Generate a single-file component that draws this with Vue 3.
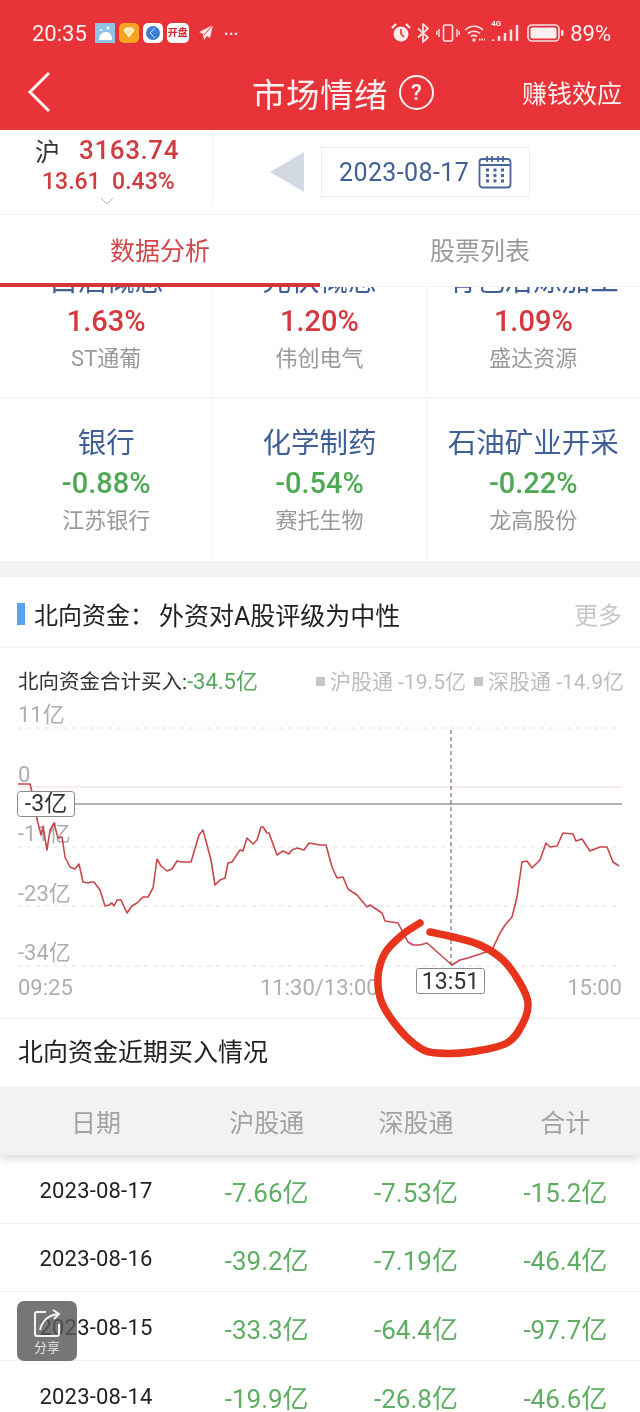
<script setup>
const sectors = [
  { name: '白酒概念', pct: '1.63%', stock: 'ST通葡', up: true },
  { name: '光伏概念', pct: '1.20%', stock: '伟创电气', up: true },
  { name: '有色冶炼加工', pct: '1.09%', stock: '盛达资源', up: true },
  { name: '银行', pct: '-0.88%', stock: '江苏银行', up: false },
  { name: '化学制药', pct: '-0.54%', stock: '赛托生物', up: false },
  { name: '石油矿业开采', pct: '-0.22%', stock: '龙高股份', up: false },
]

const rows = [
  ['2023-08-17', '-7.66亿', '-7.53亿', '-15.2亿'],
  ['2023-08-16', '-39.2亿', '-7.19亿', '-46.4亿'],
  ['2023-08-15', '-33.3亿', '-64.4亿', '-97.7亿'],
  ['2023-08-14', '-19.9亿', '-26.8亿', '-46.6亿'],
]

// chart y is relative to the chart block, which starts at 650
const raw = [
  [18, 784], [30, 784], [32, 792], [35, 810], [38, 823], [41, 835], [43, 827], [47, 850], [50, 830], [54, 823],
  [58, 838], [62, 837], [65, 857], [70, 867], [75, 869], [79, 864], [83, 882], [88, 883], [91, 882], [94, 882],
  [100, 890], [105, 906], [109, 905], [112, 903], [114, 906], [117, 900], [121, 900], [127, 913], [132, 906],
  [137, 903], [143, 897], [148, 897], [153, 888], [157, 859], [161, 866], [167, 871], [172, 869], [177, 861],
  [182, 862], [191, 862], [199, 835], [203, 830], [211, 860], [215, 885], [220, 880], [225, 878], [228, 863],
  [232, 862], [240, 850], [243, 851], [247, 838], [253, 844], [257, 840], [261, 827], [263, 827], [267, 833],
  [269, 833], [277, 855], [283, 851], [289, 854], [292, 850], [297, 848], [304, 850], [309, 843], [320, 845],
  [326, 845], [332, 867], [337, 878], [343, 877], [348, 889], [357, 895], [367, 907], [370, 905], [382, 913],
  [385, 921], [398, 923], [408, 942], [413, 945], [420, 945], [427, 943], [452, 965], [460, 960], [468, 958],
  [477, 955], [492, 950], [500, 933], [505, 925], [512, 917], [517, 897], [522, 862], [527, 861], [532, 868],
  [540, 860], [546, 843], [550, 847], [557, 846], [563, 833], [573, 834], [576, 841], [582, 839], [590, 851],
  [600, 847], [607, 847], [613, 862], [619, 866],
]
const flowLine = raw.map(([x, y]) => `${x},${y - 650}`).join(' ')

const ring = [
  [420, 923], [402, 935], [385, 953], [378, 977], [382, 1003], [400, 1030], [420, 1048], [437, 1053],
  [470, 1052], [507, 1043], [523, 1023], [528, 1003], [520, 983], [503, 960], [480, 945], [453, 937], [430, 932],
]
function smooth(points) {
  let d = `M${points[0][0]} ${points[0][1] - 650}`
  for (let i = 0; i < points.length - 1; i++) {
    const p0 = points[Math.max(i - 1, 0)]
    const p1 = points[i]
    const p2 = points[i + 1]
    const p3 = points[Math.min(i + 2, points.length - 1)]
    const c1x = p1[0] + (p2[0] - p0[0]) / 6
    const c1y = p1[1] + (p2[1] - p0[1]) / 6 - 650
    const c2x = p2[0] - (p3[0] - p1[0]) / 6
    const c2y = p2[1] - (p3[1] - p1[1]) / 6 - 650
    d += ` C${c1x} ${c1y} ${c2x} ${c2y} ${p2[0]} ${p2[1] - 650}`
  }
  return d
}
const ringPath = smooth(ring)

const gridLines = [78, 197, 256, 316]
const yLabels = [
  { text: '11亿', y: 72 },
  { text: '0', y: 132 },
  { text: '-11亿', y: 191 },
  { text: '-23亿', y: 251 },
  { text: '-34亿', y: 310 },
]
</script>

<template>
  <div class="page">
    <header class="head">
      <div class="status">
        <span class="clock">20:35</span>
        <svg class="ico" width="20" height="20" viewBox="0 0 20 20">
          <rect width="20" height="20" fill="#8fc4e6" />
          <path d="M4 17c0-5 3-8 7-8s6 3 6 8z" fill="#fff" />
          <circle cx="13" cy="5" r="1.5" fill="#fff" />
          <circle cx="6" cy="7" r="1" fill="#fff" />
        </svg>
        <svg class="ico" width="20" height="20" viewBox="0 0 20 20">
          <rect width="20" height="20" rx="5" fill="#f7a623" />
          <path d="M5 7l2-2h6l2 2-5 7z" fill="#ffe9a8" stroke="#fff" stroke-width="1" />
        </svg>
        <svg class="ico" width="20" height="20" viewBox="0 0 20 20">
          <rect width="20" height="20" rx="5" fill="#fff" />
          <circle cx="10" cy="10" r="7" fill="#3a80d6" />
          <path d="M12 5L7 10l5 5" fill="none" stroke="#cfe2f8" stroke-width="1" />
        </svg>
        <span class="open">开盘</span>
        <svg class="ico plane" width="16" height="18" viewBox="0 0 16 18">
          <path d="M15 1L1 8l4 2 1 6 3-4 3 2z" fill="#fbe9e9" />
          <path d="M15 1L6 11" stroke="#e83338" stroke-width="1" />
        </svg>
        <span class="dots">···</span>
        <span class="grow"></span>
        <svg class="ico alarm" width="22" height="22" viewBox="0 0 22 22">
          <circle cx="11" cy="12" r="7.5" fill="#fdeeee" />
          <path d="M11 7v5l3 3" fill="none" stroke="#e83338" stroke-width="1.6" />
          <path d="M2 6l4-4M20 6l-4-4" stroke="#fdeeee" stroke-width="2.2" />
        </svg>
        <svg class="ico blue" width="12" height="20" viewBox="0 0 12 20">
          <path d="M1 5.5l10 9-5 4.5V1l5 4.500-10 9" fill="none" stroke="#fbe3e3" stroke-width="1.700" />
        </svg>
        <svg class="ico" width="24" height="20" viewBox="0 0 24 20">
          <rect x="7.500" y="2" width="9" height="16" rx="1.500" fill="none" stroke="#fbe3e3" stroke-width="1.600" />
          <path d="M3 6v8M21 6v8M.8 8v4M23.200 8v4" stroke="#fbe3e3" stroke-width="1.400" />
        </svg>
        <svg class="ico" width="22" height="20" viewBox="0 0 22 20">
          <path d="M1 7c5.500-5 13-5 18 0M4 10.500c3.500-3 9-3 12 0M7 13.500c2-1.500 4-1.500 6 0" fill="none" stroke="#fbe3e3" stroke-width="1.700" />
          <circle cx="10" cy="17" r="1.700" fill="#fbe3e3" />
          <path d="M15 16.500h6" stroke="#fbe3e3" stroke-width="2" stroke-dasharray="1.500 1" />
        </svg>
        <span class="signal">
          <i class="net">4G</i>
          <svg width="32" height="20" viewBox="0 0 32 20">
            <path d="M2 18v-1.500M8 18v-5M14 18v-8M20 18v-11.500M26 18v-16" stroke="#fbe3e3" stroke-width="2.500" />
          </svg>
        </span>
        <svg class="ico" width="38" height="20" viewBox="0 0 38 20">
          <rect x="1" y="2" width="31" height="16" rx="4" fill="none" stroke="#fbe3e3" stroke-width="1.600" />
          <rect x="3.500" y="4.500" width="26" height="11" rx="2" fill="#fdf0f0" />
          <rect x="34" y="7" width="2.500" height="6" rx="1" fill="#fbe3e3" />
        </svg>
        <span class="battery">89%</span>
      </div>
      <div class="nav">
        <svg class="back" width="24" height="42" viewBox="0 0 24 42">
          <path d="M22 2L3 21l19 19" fill="none" stroke="#fdf0f0" stroke-width="3" />
        </svg>
        <div class="nav-title">
          <span>市场情绪</span>
          <i class="help">?</i>
        </div>
        <span class="nav-right">赚钱效应</span>
      </div>
    </header>

    <section class="market">
      <div class="index">
        <div class="index-top"><span class="hu">沪</span><b>3163.74</b></div>
        <div class="index-sub">13.61&nbsp;&nbsp;0.43%</div>
        <svg class="caret" width="14" height="8" viewBox="0 0 14 8">
          <path d="M1 1l6 6 6-6" fill="none" stroke="#b5b5b5" stroke-width="1" />
        </svg>
      </div>
      <div class="date-wrap">
        <span class="tri"></span>
        <div class="date-box">
          <span>2023-08-17</span>
          <svg width="34" height="34" viewBox="0 0 34 34">
            <rect x="1.500" y="4" width="31" height="28.500" rx="3" fill="none" stroke="#4a659c" stroke-width="1.800" />
            <path d="M1.500 10h31M9 1v6M14 1v6M20 1v6M25 1v6" stroke="#4a659c" stroke-width="1.800" />
            <path d="M8 15h3M15.500 15h3M23 15h3M8 20.500h3M15.500 20.500h3M23 20.500h3M8 26h3M15.500 26h3M23 26h3" stroke="#4a659c" stroke-width="3" />
          </svg>
        </div>
      </div>
    </section>

    <nav class="tabs">
      <span class="tab active">数据分析</span>
      <span class="tab">股票列表</span>
    </nav>

    <section class="sectors">
      <div class="sector-grid">
        <div v-for="s in sectors" :key="s.name" class="sector">
          <div class="sector-name">{{ s.name }}</div>
          <div class="sector-pct" :class="s.up ? 'up' : 'down'">{{ s.pct }}</div>
          <div class="sector-stock">{{ s.stock }}</div>
        </div>
      </div>
    </section>

    <section class="flow">
      <div class="flow-head">
        <i class="mark"></i>
        <span class="flow-title">北向资金：</span>
        <span class="flow-title rating">外资对A股评级为中性</span>
        <span class="more">更多</span>
      </div>
      <div class="chart">
        <svg class="chart-svg" width="640" height="368" viewBox="0 0 640 368">
          <line v-for="y in gridLines" :key="y" x1="18" x2="622" :y1="y" :y2="y" class="grid" />
          <line x1="18" x2="622" y1="137" y2="137" class="zero" />
          <text x="18" y="39" class="sum">北向资金合计买入:<tspan class="sum-val">-34.5亿</tspan></text>
          <rect x="316" y="27" width="9" height="9" class="dot" />
          <text x="330" y="39" class="legend">沪股通 -19.5亿</text>
          <rect x="474" y="27" width="9" height="9" class="dot" />
          <text x="488" y="39" class="legend">深股通 -14.9亿</text>
          <text v-for="l in yLabels" :key="l.text" x="18" :y="l.y" class="axis">{{ l.text }}</text>
          <text x="18" y="345" class="axis">09:25</text>
          <text x="260" y="345" class="axis">11:30/13:00</text>
          <text x="622" y="345" class="axis end">15:00</text>
          <polyline :points="flowLine" class="line" />
          <line x1="18" x2="622" y1="154" y2="154" class="cross" />
          <line x1="451" x2="451" y1="80" y2="316" class="cross-v" />
          <rect x="17.500" y="141.500" width="57" height="25" rx="3" class="tip" />
          <text x="46" y="161" class="tip-text">-3亿</text>
          <rect x="416.500" y="318.500" width="68" height="25" rx="2" class="tip" />
          <text x="450.500" y="339" class="tip-text">13:51</text>
          <path :d="ringPath" class="ring" />
        </svg>
      </div>
    </section>

    <section class="recent">
      <h3>北向资金近期买入情况</h3>
      <div class="thead">
        <span>日期</span><span>沪股通</span><span>深股通</span><span>合计</span>
      </div>
      <div v-for="r in rows" :key="r[0]" class="trow">
        <span class="day">{{ r[0] }}</span>
        <span v-for="(v, i) in r.slice(1)" :key="i" class="val">{{ v }}</span>
      </div>
    </section>

    <div class="share">
      <svg width="30" height="30" viewBox="0 0 30 30">
        <path d="M14 4H5a2 2 0 0 0-2 2v20a2 2 0 0 0 2 2h20a2 2 0 0 0 2-2v-10" fill="none" stroke="#f4f4f4" stroke-width="2" />
        <path d="M8 22c2-9 8-15 19-16M21 2l6 4-5 5" fill="none" stroke="#f4f4f4" stroke-width="2" />
      </svg>
      <span>分享</span>
    </div>
  </div>
</template>

<style>
html, body { margin: 0; background: #fff; }
</style>

<style scoped>
.page {
  position: relative;
  width: 640px;
  height: 1412px;
  overflow: hidden;
  background: #fff;
  font-family: Roboto, "Noto Sans CJK SC", sans-serif;
  filter: blur(0.4px);
}
.head {
  height: 130px;
  background: #e83338;
  color: #fdf0f0;
}
.status {
  height: 42px;
  padding: 12px 29px 0 32px;
  display: flex;
  align-items: center;
  gap: 4px;
}
.clock { font-size: 22px; margin-right: 4px; }
.ico { flex: none; }
.open {
  width: 22px;
  height: 20px;
  border-radius: 5px;
  background: #fff;
  color: #d8282e;
  font-size: 10px;
  font-weight: 700;
  line-height: 20px;
  text-align: center;
  white-space: nowrap;
}
.plane { margin-left: 5px; }
.dots { font-size: 16px; font-weight: 700; margin-left: 6px; letter-spacing: 0; }
.grow { flex: 1; }
.alarm { margin-right: 1px; }
.blue { margin-right: 3px; }
.signal { position: relative; width: 32px; height: 20px; margin-left: 1px; }
.net {
  position: absolute;
  left: 0;
  top: -4px;
  font-size: 8px;
  font-style: normal;
  font-weight: 700;
}
.battery { font-size: 22px; margin-left: 1px; }
.nav {
  height: 76px;
  display: flex;
  align-items: center;
  padding: 0 18px 0 27px;
}
.nav-title {
  flex: 1;
  display: flex;
  align-items: center;
  margin-left: 201px;
  font-size: 33.5px;
  letter-spacing: 0.5px;
}
.help {
  width: 31px;
  height: 31px;
  margin-left: 11px;
  border: 2px solid #fdf0f0;
  border-radius: 50%;
  font-size: 22px;
  font-style: normal;
  font-weight: 500;
  line-height: 31px;
  text-align: center;
}
.nav-right { font-size: 25px; }
.market {
  height: 85px;
  padding-top: 1px;
  box-sizing: border-box;
  display: flex;
  border-bottom: 1px solid #eeeeee;
}
.index {
  position: relative;
  width: 213px;
  height: 76px;
  padding-left: 35px;
  box-sizing: border-box;
  border-right: 1px solid #f3f3f3;
}
.index-top {
  display: flex;
  align-items: center;
  height: 38px;
}
.hu { font-size: 25px; color: #333; width: 44px; }
.index-top b { font-size: 26px; font-weight: 500; color: #cf3b40; letter-spacing: 0.6px; }
.index-sub {
  margin: -2px 0 0 7px;
  font-size: 23px;
  line-height: 30px;
  font-weight: 500;
  color: #cf3b40;
  white-space: nowrap;
}
.caret { position: absolute; left: 100px; top: 66px; }
.date-wrap {
  flex: 1;
  display: flex;
  align-items: center;
  height: 82px;
  padding-left: 57px;
}
.tri {
  width: 0;
  height: 0;
  border-style: solid;
  border-width: 20px 34px 20px 0;
  border-color: transparent #d3d9e2 transparent transparent;
}
.date-box {
  margin-left: 17px;
  width: 209px;
  height: 50px;
  box-sizing: border-box;
  border: 1px solid #eeeeee;
  display: flex;
  align-items: center;
  gap: 9px;
  padding-left: 17px;
  font-size: 25px;
  letter-spacing: 0.4px;
  color: #3f5f96;
}
.tabs {
  position: relative;
  height: 72px;
  display: flex;
  z-index: 1;
  background: #fff;
  border-bottom: 1px solid #f4f4f4;
  box-sizing: border-box;
}
.tab {
  flex: 1;
  text-align: center;
  padding-top: 19px;
  font-size: 25px;
  line-height: 36px;
  color: #9a9a9a;
}
.tab.active { color: #d2454a; }
.tabs::after {
  content: "";
  position: absolute;
  left: 0;
  bottom: -1px;
  width: 320px;
  height: 4px;
  background: #d8353a;
}
.sectors {
  height: 274px;
  overflow: hidden;
}
.sector-grid {
  margin-top: -51px;
  display: grid;
  grid-template-columns: repeat(3, 1fr);
  grid-auto-rows: 162px;
}
.sector {
  padding-top: 29px;
  box-sizing: border-box;
  text-align: center;
  border-right: 1px solid #f5f5f5;
  border-bottom: 1px solid #f2f2f2;
}
.sector:nth-child(3n) { border-right: 0; }
.sector:nth-child(n + 4) { border-bottom: 0; }
.sector-name { font-size: 28.500px; line-height: 34px; color: #3f5f96; white-space: nowrap; }
.sector-pct { margin-top: 5px; font-size: 29px; line-height: 34px; font-weight: 500; }
.sector-pct.up { color: #d6383e; }
.sector-pct.down { color: #4fa854; }
.sector-stock { margin-top: 6px; font-size: 22px; line-height: 30px; color: #999; }
.flow {
  border-top: 16px solid #f3f3f3;
}
.flow-head {
  height: 71px;
  box-sizing: border-box;
  display: flex;
  align-items: center;
  padding: 3px 18px 0 17px;
  border-bottom: 1px solid #f0f0f0;
}
.mark { width: 8px; height: 22px; background: #5aa2ec; margin-right: 9px; }
.flow-title { font-size: 24px; color: #222; }
.rating { font-size: 25px; margin-left: 5px; }
.more { margin-left: auto; font-size: 24px; color: #c8c8c8; }
.chart {
  height: 371px;
  padding-top: 2px;
  border-bottom: 1px solid #f0f0f0;
  box-sizing: border-box;
}
.chart-svg { display: block; overflow: visible; position: relative; z-index: 2; }
.grid { stroke: #e2e2e2; stroke-width: 1; stroke-dasharray: 4 5; }
.zero { stroke: #f0d8da; stroke-width: 1; }
.sum { font-size: 20.500px; fill: #333; }
.sum-val { fill: #59a75e; font-size: 22px; }
.legend { font-size: 21px; fill: #bdbdbd; }
.dot { fill: #c6c6c6; }
.axis { font-size: 22px; fill: #aeaeae; }
.axis.end { text-anchor: end; }
.line { fill: none; stroke: #c8474c; stroke-width: 1.6; stroke-linejoin: round; }
.cross { stroke: #666; stroke-width: 1; }
.cross-v { stroke: #555; stroke-width: 1; stroke-dasharray: 4 3; }
.tip { fill: #fff; stroke: #8a8a8a; stroke-width: 1; }
.tip-text { font-size: 23px; fill: #333; text-anchor: middle; }
.ring { fill: none; stroke: #e8341c; stroke-width: 7.500; stroke-linecap: round; stroke-linejoin: round; }
.recent h3 {
  margin: 0;
  height: 68px;
  padding-left: 18px;
  font-size: 25px;
  font-weight: 400;
  line-height: 68px;
  color: #222;
}
.thead, .trow {
  display: grid;
  grid-template-columns: 192px 1fr 1fr 1fr;
  align-items: center;
  text-align: center;
}
.thead {
  position: relative;
  height: 68px;
  background: #f2f2f2;
  font-size: 25px;
  color: #a2a2a2;
  box-shadow: 0 4px 8px rgba(0, 0, 0, 0.14);
}
.trow {
  height: 68.6px;
  padding-top: 3px;
  box-sizing: border-box;
  border-bottom: 1px solid #f3f3f3;
}
.day { font-size: 22px; letter-spacing: 0.2px; color: #222; }
.val { font-size: 26px; color: #5fad63; }
.share {
  position: absolute;
  left: 17px;
  top: 1301px;
  width: 60px;
  height: 60px;
  border-radius: 7px;
  background: rgba(88, 88, 88, 0.82);
  color: #e4e4e4;
  display: flex;
  flex-direction: column;
  align-items: center;
  padding-top: 7px;
  box-sizing: border-box;
  z-index: 3;
}
.share span { font-size: 13px; line-height: 18px; margin-top: 1px; }
</style>
